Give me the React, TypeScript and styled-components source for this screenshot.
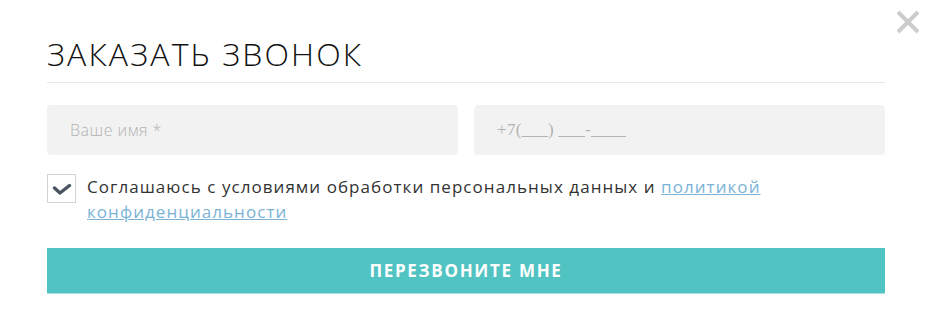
import React, { useState } from 'react';
import styled, { createGlobalStyle } from 'styled-components';

const GlobalStyle = createGlobalStyle`
  body {
    margin: 0;
    background: #fff;
    font-family: 'Open Sans', 'Liberation Sans', sans-serif;
  }
`;

const Modal = styled.div`
  position: relative;
  width: 927px;
  height: 334px;
  box-sizing: border-box;
  padding: 33px 42px 0 47px;
  background: #fff;
`;

const CloseButton = styled.button`
  position: absolute;
  top: 9px;
  right: 6px;
  width: 26px;
  height: 26px;
  padding: 0;
  border: none;
  background: none;
  cursor: pointer;
`;

const Title = styled.h2`
  margin: 0;
  padding-bottom: 7px;
  border-bottom: 1px solid #e6e6e6;
  font-size: 32px;
  line-height: 42px;
  font-weight: 300;
  color: #111;
  text-transform: uppercase;
  letter-spacing: 2.15px;
`;

const Fields = styled.div`
  display: grid;
  grid-template-columns: 1fr 1fr;
  gap: 16px;
  margin-top: 22px;
`;

const Input = styled.input<{ $serif?: boolean }>`
  height: 50px;
  box-sizing: border-box;
  padding: 0 23px;
  border: none;
  border-radius: 4px;
  background: #f2f2f2;
  font-family: ${p => (p.$serif ? "'Liberation Serif', serif" : "'Open Sans', sans-serif")};
  font-size: ${p => (p.$serif ? '17px' : '16px')};
  font-weight: 300;
  letter-spacing: ${p => (p.$serif ? '0.3px' : '0.5px')};
  color: #333;
  outline: none;

  &::placeholder {
    color: #b3b3b3;
  }
`;

const Agree = styled.label`
  display: flex;
  align-items: flex-start;
  gap: 11px;
  margin-top: 19px;
  cursor: pointer;
`;

const Box = styled.span`
  flex: none;
  display: flex;
  align-items: center;
  justify-content: center;
  width: 29px;
  height: 29px;
  box-sizing: border-box;
  border: 1px solid #d4d4d4;
  background: #fff;
`;

const AgreeText = styled.span`
  font-size: 17px;
  line-height: 25px;
  letter-spacing: 1.05px;
  color: #333;
`;

const Link = styled.a`
  color: #7bb3d6;
  text-decoration: underline;
`;

const Submit = styled.button`
  display: block;
  width: 100%;
  height: 46px;
  margin-top: 24px;
  border: none;
  border-bottom: 1px solid #a7e0df;
  background: #50c3c2;
  color: #fff;
  font-family: 'Open Sans', sans-serif;
  font-size: 17px;
  font-weight: 700;
  letter-spacing: 1.7px;
  text-transform: uppercase;
  cursor: pointer;
`;

const App = () => {
  const [checked, setChecked] = useState(true);

  return (
    <Modal>
      <GlobalStyle />
      <CloseButton aria-label="Закрыть">
        <svg width="26" height="26" viewBox="0 0 26 26">
          <path d="M3 3 L23 23 M23 3 L3 23" stroke="#cccccc" strokeWidth="4" />
        </svg>
      </CloseButton>
      <Title>Заказать звонок</Title>
      <Fields>
        <Input placeholder="Ваше имя *" />
        <Input $serif placeholder="+7(___) ___-____" />
      </Fields>
      <Agree onClick={() => setChecked(c => !c)}>
        <Box>
          {checked && (
            <svg width="20" height="12" viewBox="0 0 20 12">
              <path d="M2.5 5 L8 10 L17.5 2.5" fill="none" stroke="#4a5561" strokeWidth="3.4" strokeLinecap="round" strokeLinejoin="round" />
            </svg>
          )}
        </Box>
        <AgreeText>
          Соглашаюсь с условиями обработки персональных данных и{' '}
          <Link href="#">политикой конфиденциальности</Link>
        </AgreeText>
      </Agree>
      <Submit>Перезвоните мне</Submit>
    </Modal>
  );
};

export default App;
